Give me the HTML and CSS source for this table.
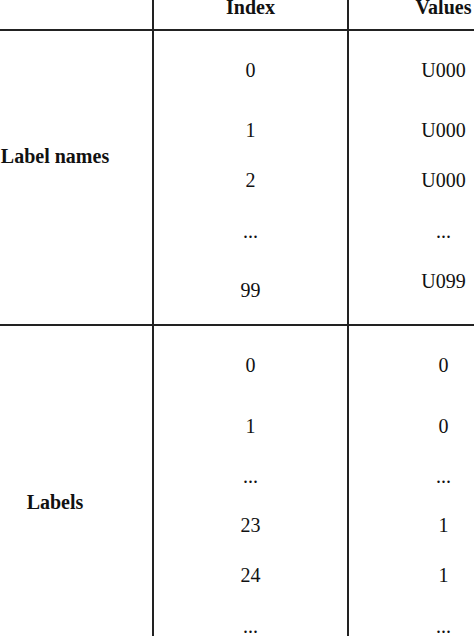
FILE: index.html
```html
<!DOCTYPE html>
<html>
<head>
<meta charset="utf-8">
<link rel="stylesheet" href="styles.css">
</head>
<body>
<div class="table">
  <div class="row head">
    <div class="cell c1"></div>
    <div class="cell c2"><div class="htext">Index</div></div>
    <div class="cell c3"><div class="htext">Values</div></div>
  </div>
  <div class="row sec sec1">
    <div class="cell c1"><div class="line label label-names">Label names</div></div>
    <div class="cell c2">
      <div class="line first">0</div>
      <div class="line long">1</div>
      <div class="line short">2</div>
      <div class="line short1">...</div>
      <div class="line mid">99</div>
    </div>
    <div class="cell c3">
      <div class="line first">U000</div>
      <div class="line long">U000</div>
      <div class="line short">U000</div>
      <div class="line short1">...</div>
      <div class="line short">U099</div>
    </div>
  </div>
  <div class="row sec sec2">
    <div class="cell c1"><div class="line label label-labels">Labels</div></div>
    <div class="cell c2">
      <div class="line first">0</div>
      <div class="line long1">1</div>
      <div class="line short">...</div>
      <div class="line short0">23</div>
      <div class="line short">24</div>
      <div class="line short1">...</div>
    </div>
    <div class="cell c3">
      <div class="line first">0</div>
      <div class="line long1">0</div>
      <div class="line short">...</div>
      <div class="line short0">1</div>
      <div class="line short">1</div>
      <div class="line short1">...</div>
    </div>
  </div>
</div>
</body>
</html>
```

FILE: styles.css
```css
html, body {
  margin: 0;
  padding: 0;
  background: #fff;
}
body {
  width: 474px;
  height: 636px;
  overflow: hidden;
  font-family: "Liberation Serif", "Times New Roman", serif;
  font-size: 20px;
  color: #111;
}
.table {
  margin-left: -42px;
  width: 580px;
}
.row {
  display: grid;
  grid-template-columns: 194px 197px 189px;
  border-bottom: 2px solid #222;
}
.cell {
  display: flex;
  flex-direction: column;
  align-items: center;
  white-space: nowrap;
}
.c2 {
  border-left: 2px solid #222;
  border-right: 2px solid #222;
}
.head .cell {
  height: 29px;
  overflow: visible;
}
.htext {
  line-height: 22px;
  margin-top: -4px;
  font-weight: bold;
}
.sec1 .cell {
  height: 293px;
}
.sec2 .cell {
  height: 340px;
}
.line {
  line-height: 22px;
  height: 22px;
}
.first { margin-top: 28px; }
.long { margin-top: 38px; }
.long1 { margin-top: 39px; }
.mid { margin-top: 37px; }
.short { margin-top: 28px; }
.short0 { margin-top: 27px; }
.short1 { margin-top: 29px; }
.label {
  font-weight: bold;
}
.label-names { margin-top: 114px; }
.label-labels { margin-top: 165px; }
```
